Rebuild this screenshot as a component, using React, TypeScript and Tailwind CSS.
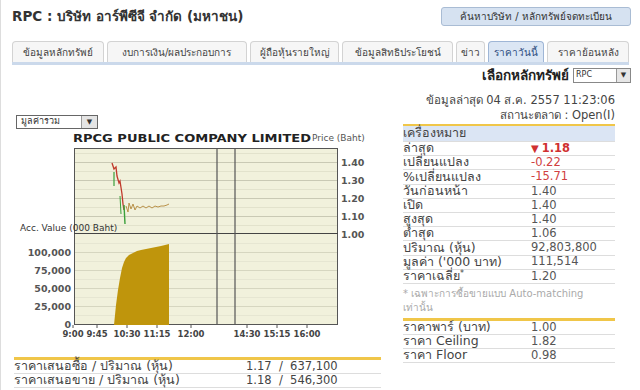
import React from "react";

const F = { fontFamily: '"DejaVu Sans", "Noto Sans", "Liberation Sans", sans-serif' };

const tabs = [
  { t: "ข้อมูลหลักทรัพย์", w: "w-[92px]" },
  { t: "งบการเงิน/ผลประกอบการ", w: "w-[140px]" },
  { t: "ผู้ถือหุ้นรายใหญ่", w: "w-[90px]" },
  { t: "ข้อมูลสิทธิประโยชน์", w: "w-[111px]" },
  { t: "ข่าว", w: "w-[29px]" },
  { t: "ราคาวันนี้", w: "w-[56px]", active: true },
  { t: "ราคาย้อนหลัง", w: "w-[82px]" },
];

const rows: { l: string; v: string; red?: boolean; arrow?: boolean; sup?: boolean }[] = [
  { l: "ล่าสุด", v: "1.18", red: true, arrow: true },
  { l: "เปลี่ยนแปลง", v: "-0.22", red: true },
  { l: "%เปลี่ยนแปลง", v: "-15.71", red: true },
  { l: "วันก่อนหน้า", v: "1.40" },
  { l: "เปิด", v: "1.40" },
  { l: "สูงสุด", v: "1.40" },
  { l: "ต่ำสุด", v: "1.06" },
  { l: "ปริมาณ (หุ้น)", v: "92,803,800" },
  { l: "มูลค่า ('000 บาท)", v: "111,514" },
  { l: "ราคาเฉลี่ย", v: "1.20", sup: true },
];

const rows2 = [
  { l: "ราคาพาร์ (บาท)", v: "1.00" },
  { l: "ราคา Ceiling", v: "1.82" },
  { l: "ราคา Floor", v: "0.98" },
];

function Chart() {
  const oy = 130;
  const Y = (y: number) => y - oy;
  const priceLabels = [
    ["1.40", 162],
    ["1.30", 180],
    ["1.20", 198],
    ["1.10", 216],
    ["1.00", 234],
  ] as const;
  const volLabels = [
    ["100,000", 252],
    ["75,000", 270],
    ["50,000", 288],
    ["25,000", 306],
    ["0", 324],
  ] as const;
  const xl = [
    ["9:00", 72],
    ["9:45", 96],
    ["10:30", 126],
    ["11:15", 156],
    ["12:00", 190],
    ["14:30", 246],
    ["15:15", 276],
    ["16:00", 306],
  ] as const;
  const redPath = [
    [111, 163], [113, 169], [115, 167], [116, 176], [118, 183], [119, 181], [121, 194], [122, 204], [123, 210],
  ];
  const tail = [
    [125, 206], [127, 212], [128, 203], [130, 209], [132, 204], [134, 210], [136, 206], [139, 208], [142, 206],
    [145, 208], [148, 206], [151, 208], [154, 206], [157, 207], [160, 206], [163, 206], [166, 205], [168, 204],
  ];
  const pts = (a: number[][]) => a.map(([x, y]) => `${x},${Y(y)}`).join(" ");
  const area = [
    [113, 325], [115, 305], [117, 290], [119, 278], [121, 268], [123, 262], [125, 258], [128, 255], [132, 253],
    [136, 251], [140, 250], [145, 249], [150, 248], [155, 247], [160, 246], [164, 245], [168, 244], [168, 325],
  ];
  return (
    <svg width={392} height={215} className="block" style={{ fontFamily: '"DejaVu Sans", sans-serif' }}>
      <text x={191} y={Y(142)} textAnchor="middle" fontSize={11} fontWeight="bold" fill="#222" textLength={238} lengthAdjust="spacingAndGlyphs">
        RPCG PUBLIC COMPANY LIMITED
      </text>
      <text x={311} y={Y(141)} fontSize={9} fill="#555">Price (Baht)</text>
      <rect x={73.5} y={Y(148.5)} width={263} height={176} fill="#f1f1dc" stroke="#555" />
      {[153, 162, 171, 180, 189, 198, 207, 216, 225].map((y) => (
        <line key={y} x1={74} x2={336} y1={Y(y) + 0.5} y2={Y(y) + 0.5} stroke={[162, 180, 198, 216].includes(y) ? "#c9c9b4" : "#e2e2cc"} />
      ))}
      {[243, 252, 261, 270, 279, 288, 297, 306, 315].map((y) => (
        <line key={y} x1={74} x2={336} y1={Y(y) + 0.5} y2={Y(y) + 0.5} stroke={[252, 270, 288, 306].includes(y) ? "#d6d6c0" : "#e6e6d2"} />
      ))}
      <line x1={73} x2={337} y1={Y(233.5)} y2={Y(233.5)} stroke="#444" />
      <line x1={216} x2={216} y1={Y(148)} y2={Y(325)} stroke="#555" strokeWidth={1.2} />
      <line x1={234} x2={234} y1={Y(148)} y2={Y(325)} stroke="#555" strokeWidth={1.2} />
      {priceLabels.map(([t, y]) => (
        <text key={t} x={340} y={Y(y) + 3.5} fontSize={9.5} fill="#555" fontWeight="bold">{t}</text>
      ))}
      {volLabels.map(([t, y]) => (
        <text key={t} x={70} y={Y(y) + 3.5} fontSize={9.5} textAnchor="end" fill="#555" fontWeight="bold">{t}</text>
      ))}
      <text x={19} y={Y(231)} fontSize={9} fill="#333">Acc. Value (000 Baht)</text>
      {xl.map(([t, x]) => (
        <g key={t}>
          <line x1={x} x2={x} y1={Y(325)} y2={Y(328)} stroke="#555" />
          <text x={x} y={Y(337)} fontSize={8.5} textAnchor="middle" fill="#444" fontWeight="bold">{t}</text>
        </g>
      ))}
      <polygon points={pts(area)} fill="#bf950c" />
      <polyline points={pts(redPath)} fill="none" stroke="#c0392b" strokeWidth={1.3} />
      <polyline points={pts([[113, 172], [113, 186]])} fill="none" stroke="#3aa03a" strokeWidth={1.2} />
      <polyline points={pts([[123, 205], [124, 224]])} fill="none" stroke="#3aa03a" strokeWidth={1.4} />
      <polyline points={pts([[119, 196], [120, 214]])} fill="none" stroke="#3aa03a" strokeWidth={1} />
      <polyline points={pts(tail)} fill="none" stroke="#b9924a" strokeWidth={1} />
    </svg>
  );
}

export default function App() {
  return (
    <div className="w-[640px] h-[390px] overflow-hidden bg-white text-[#333] border-l border-[#ddd]" style={F}>
      <div className="flex justify-between items-start pl-[11px] pr-[9px] pt-[7px]">
        <div className="text-[13.5px] font-bold text-[#333] leading-[18px]">RPC : บริษัท อาร์พีซีจี จำกัด (มหาชน)</div>
        <div className="h-[19px] w-[190px] flex items-center justify-center rounded-[3px] border border-[#a9bcd4] bg-[#d6e2f1] text-[10px] text-[#333]">
          ค้นหาบริษัท / หลักทรัพย์จดทะเบียน
        </div>
      </div>
      <div className="mt-[15px] mx-[11px] flex gap-[3px] border-b-[3px] border-[#cbd9eb]">
        {tabs.map((t) => (
          <div
            key={t.t}
            className={
              t.active
                ? `${t.w} h-[21px] flex items-center justify-center rounded-t-[4px] border border-b-0 border-[#9fb6d6] bg-[#dbe6f4] text-[10px] text-[#2d4d80]`
                : `${t.w} h-[21px] flex items-center justify-center rounded-t-[4px] border border-b-0 border-[#d3d3d3] bg-[#f6f6f6] text-[10px] text-[#444]`
            }
          >
            {t.t}
          </div>
        ))}
      </div>
      <div className="flex justify-end items-center mr-[9px] mt-[2px] h-[16px] gap-[4px]">
        <span className="text-[13.5px] font-bold text-[#222]">เลือกหลักทรัพย์</span>
        <div className="w-[58px] h-[15px] border border-[#888] flex items-center justify-between bg-white">
          <span className="text-[8px] pl-[2px] text-[#333]">RPC</span>
          <span className="w-[14px] h-[13px] bg-[#e6e6e6] border-l border-[#999] flex items-center justify-center text-[7px]">▼</span>
        </div>
      </div>
      <div className="flex">
        <div className="w-[398px] shrink-0">
          <div className="mt-[32px] ml-[15px] w-[82px] h-[14px] border border-[#666] flex items-center justify-between bg-white">
            <span className="text-[9px] pl-[4px] text-[#333]">มูลค่ารวม</span>
            <span className="w-[16px] h-[12px] bg-[#e4e4e4] border-l border-[#999] flex items-center justify-center text-[7px]">▼</span>
          </div>
          <div className="mt-[1px]">
            <Chart />
          </div>
          <div className="ml-[13px] w-[367px] mt-[12px] border-t-[3px] border-[#f0c649]">
            <div className="flex h-[14px] items-center border-b border-[#ddd]">
              <span className="w-[232px] text-[12.5px] text-[#444]">ราคาเสนอซื้อ / ปริมาณ (หุ้น)</span>
              <span className="text-[11.5px] text-[#444]">1.17&nbsp;&nbsp;/&nbsp;&nbsp;637,100</span>
            </div>
            <div className="flex h-[14px] items-center border-b border-[#ddd]">
              <span className="w-[232px] text-[12.5px] text-[#444]">ราคาเสนอขาย / ปริมาณ (หุ้น)</span>
              <span className="text-[11.5px] text-[#444]">1.18&nbsp;&nbsp;/&nbsp;&nbsp;546,300</span>
            </div>
          </div>
        </div>
        <div className="w-[212px] shrink-0 ml-[4px] text-[11.5px]">
          <div className="mt-[10px] text-right leading-[15px] text-[#444]">
            <div>ข้อมูลล่าสุด 04 ส.ค. 2557 11:23:06</div>
            <div>สถานะตลาด : Open(I)</div>
          </div>
          <div className="mt-[1px] border-t-[2px] border-[#f0c649]">
            <div className="h-[16px] flex items-center bg-[#dbe5f4] text-[12.5px] text-[#444] border-b border-[#ddd]">เครื่องหมาย</div>
            {rows.map((r) => (
              <div key={r.l} className="h-[14.2px] flex items-center border-b border-[#ddd]">
                <span className="w-[128px] text-[12.5px] text-[#444]">
                  {r.l}
                  {r.sup ? <sup className="text-[8px]">*</sup> : null}
                </span>
                <span className={r.red ? (r.arrow ? "text-[#d03030] font-bold" : "text-[#d04040]") : "text-[#555]"}>
                  {r.arrow ? <span className="text-[10px] mr-[3px]">▼</span> : null}
                  {r.v}
                </span>
              </div>
            ))}
            <div className="text-[10px] text-[#aaa] leading-[14px] pt-[3px] pb-[3px]">
              * เฉพาะการซื้อขายแบบ Auto-matching
              <br />
              เท่านั้น
            </div>
            <div className="border-t-[3px] border-[#f0c649]">
              {rows2.map((r) => (
                <div key={r.l} className="h-[14.2px] flex items-center border-b border-[#ddd]">
                  <span className="w-[128px] text-[12.5px] text-[#444]">{r.l}</span>
                  <span className="text-[#555]">{r.v}</span>
                </div>
              ))}
            </div>
          </div>
        </div>
      </div>
    </div>
  );
}
